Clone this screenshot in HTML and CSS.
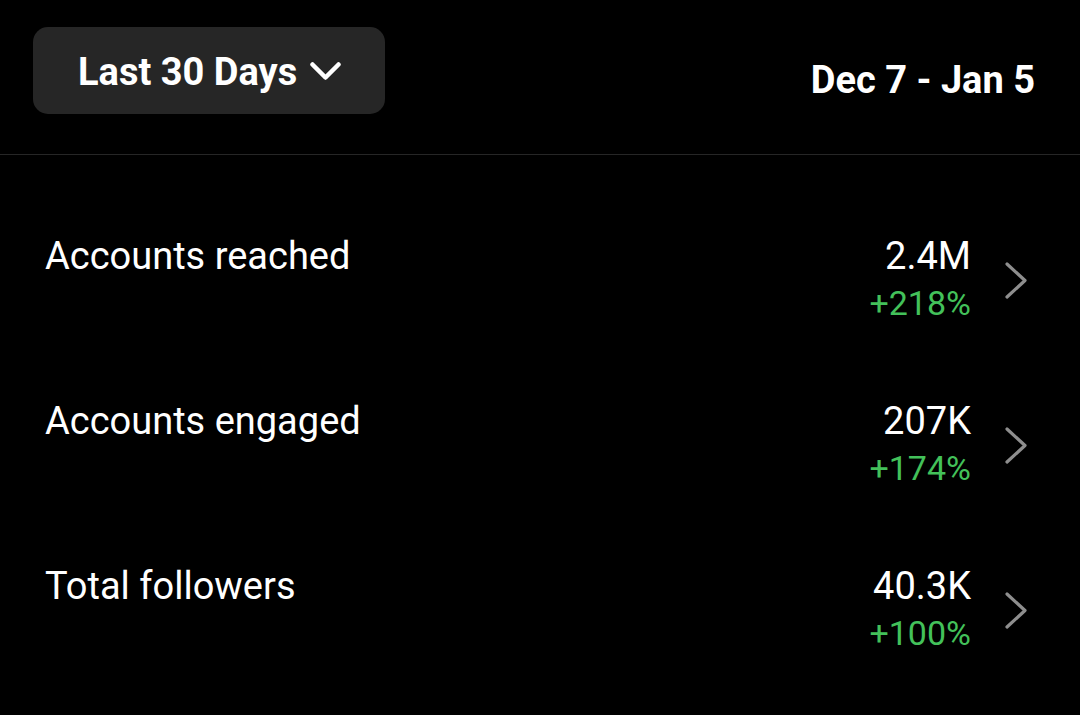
FILE: index.html
```html
<!DOCTYPE html>
<html lang="en">
<head>
<meta charset="utf-8">
<title>Insights</title>
<link rel="stylesheet" href="styles.css">
</head>
<body>
<div class="screen">
  <header class="range-bar">
    <button class="range-picker" type="button">
      <span class="range-label">Last 30 Days</span>
      <svg class="caret" viewBox="0 0 31 18" width="31" height="18" aria-hidden="true">
        <path d="M2.5 2.5 L15.5 15.5 L28.5 2.5" fill="none" stroke="#fff" stroke-width="4.5" stroke-linecap="round" stroke-linejoin="round"/>
      </svg>
    </button>
    <div class="range-dates">Dec 7 - Jan 5</div>
  </header>

  <ul class="metrics">
    <li class="metric">
      <span class="metric-label">Accounts reached</span>
      <div class="metric-values">
        <span class="metric-value">2.4M</span>
        <span class="metric-change">+218%</span>
      </div>
      <svg class="chev" viewBox="0 0 24 39" width="24" height="39" aria-hidden="true">
        <path d="M3 3 L21 19.5 L3 36" fill="none" stroke="#8e8e8e" stroke-width="3.2" stroke-linecap="round" stroke-linejoin="round"/>
      </svg>
    </li>
    <li class="metric">
      <span class="metric-label">Accounts engaged</span>
      <div class="metric-values">
        <span class="metric-value">207K</span>
        <span class="metric-change">+174%</span>
      </div>
      <svg class="chev" viewBox="0 0 24 39" width="24" height="39" aria-hidden="true">
        <path d="M3 3 L21 19.5 L3 36" fill="none" stroke="#8e8e8e" stroke-width="3.2" stroke-linecap="round" stroke-linejoin="round"/>
      </svg>
    </li>
    <li class="metric">
      <span class="metric-label">Total followers</span>
      <div class="metric-values">
        <span class="metric-value">40.3K</span>
        <span class="metric-change">+100%</span>
      </div>
      <svg class="chev" viewBox="0 0 24 39" width="24" height="39" aria-hidden="true">
        <path d="M3 3 L21 19.5 L3 36" fill="none" stroke="#8e8e8e" stroke-width="3.2" stroke-linecap="round" stroke-linejoin="round"/>
      </svg>
    </li>
  </ul>
</div>
</body>
</html>
```

FILE: styles.css
```css
* {
  box-sizing: border-box;
}

html, body {
  margin: 0;
  padding: 0;
  background: #000;
}

body {
  font-family: Roboto, "Liberation Sans", sans-serif;
  color: #fff;
  width: 1080px;
  height: 715px;
  overflow: hidden;
}

/* date range header */
.range-bar {
  display: flex;
  align-items: flex-start;
  justify-content: space-between;
  height: 155px;
  padding: 27px 45px 0 33px;
  border-bottom: 1px solid #262626;
}

.range-picker {
  display: flex;
  align-items: center;
  gap: 13px;
  width: 352px;
  height: 87px;
  padding: 3px 0 0 45px;
  border: none;
  border-radius: 15px;
  background: #262626;
  color: #fff;
  font-family: inherit;
  font-size: 38px;
  font-weight: 700;
  line-height: 44px;
}

.caret {
  margin-top: -2px;
}

.range-dates {
  margin-top: 31px;
  font-size: 38px;
  font-weight: 700;
  line-height: 44px;
}

/* metric rows */
.metrics {
  list-style: none;
  margin: 0;
  padding: 60px 0 0 0;
}

.metric {
  display: flex;
  align-items: flex-start;
  height: 165px;
  padding: 19px 52px 0 45px;
}

.metric-label {
  flex: 1;
  font-size: 38px;
  line-height: 44px;
}

.metric-values {
  display: flex;
  flex-direction: column;
  align-items: flex-end;
  margin-right: 33px;
}

.metric-value {
  font-size: 38px;
  line-height: 44px;
}

.metric-change {
  font-size: 34px;
  line-height: 51px;
  color: #43c15a;
}

.chev {
  margin-top: 27px;
}
```
